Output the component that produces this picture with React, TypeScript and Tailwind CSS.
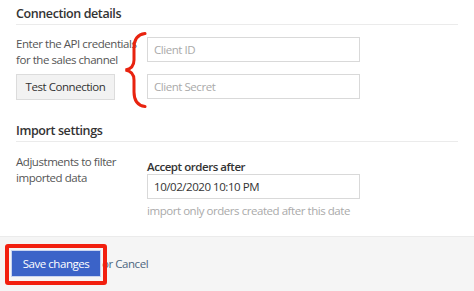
import React from 'react';

const Bracket: React.FC = () => (
  <svg
    className="absolute left-[108px] top-[-4px]"
    width="24"
    height="76"
    viewBox="0 0 24 76"
    fill="none"
  >
    <path
      d="M21 1.5 C13 2.5 10 8 10 16 L10 28 C10 34 7 37 1.5 38 C7 39 10 42 10 48 L10 60 C10 68 13 73.5 21 74.5"
      stroke="#e8230f"
      strokeWidth="3"
      strokeLinecap="round"
    />
  </svg>
);

const App: React.FC = () => {
  return (
    <div
      className="w-[474px] h-[291px] bg-white flex flex-col overflow-hidden text-[11.5px] tracking-[-0.45px] text-[#555]"
      style={{ fontFamily: '"Open Sans", "DejaVu Sans", sans-serif' }}
    >
      <div className="flex-1 px-4">
        <h2 className="pt-[5px] pb-[1px] leading-[18px] text-[12.5px] tracking-[-0.4px] font-semibold text-[#333] border-b border-[#ebebeb]">
          Connection details
        </h2>

        <div className="relative flex mt-[11px]">
          <div className="w-[131px] shrink-0">
            <p className="leading-[16px] whitespace-nowrap">
              Enter the API credentials
              <br />
              for the sales channel
            </p>
            <button className="mt-[6px] h-[26px] w-[99px] bg-[#f2f2f2] border border-[#dcdcdc] text-[11.5px] tracking-[-0.45px] text-[#333]">
              Test Connection
            </button>
          </div>
          <Bracket />
          <div className="flex flex-col gap-[12px] pt-[1px]">
            <input
              placeholder="Client ID"
              className="w-[213px] h-[25px] px-[6px] border border-[#d9d9d9] text-[11.5px] tracking-[-0.45px] placeholder:text-[#aaa] outline-none"
            />
            <input
              placeholder="Client Secret"
              className="w-[213px] h-[25px] px-[6px] border border-[#d9d9d9] text-[11.5px] tracking-[-0.45px] placeholder:text-[#aaa] outline-none"
            />
          </div>
        </div>

        <h2 className="mt-[17px] pt-[5px] pb-[1px] leading-[18px] text-[12.5px] tracking-[-0.4px] font-semibold text-[#333] border-b border-[#ebebeb]">
          Import settings
        </h2>

        <div className="flex mt-[12px]">
          <p className="w-[131px] shrink-0 leading-[16px] whitespace-nowrap">
            Adjustments to filter
            <br />
            imported data
          </p>
          <div className="pt-[6px]">
            <label className="block leading-[14px] font-semibold text-[#333]">Accept orders after</label>
            <input
              defaultValue="10/02/2020 10:10 PM"
              className="w-[213px] h-[25px] px-[6px] border border-[#d9d9d9] text-[11.5px] tracking-[-0.45px] text-[#333] outline-none"
            />
            <p className="mt-[4px] leading-[16px] text-[#aaa]">import only orders created after this date</p>
          </div>
        </div>
      </div>

      <div className="relative h-[55px] bg-[#f5f5f5] border-t border-[#ebebeb] flex items-center pl-[11px] pb-[1px]">
        <button className="h-[27px] w-[90px] bg-[#3b63c8] border border-[#c9d4f0] text-white text-[11.5px] tracking-[-0.45px]">
          Save changes
        </button>
        <span className="ml-[1px] text-[#4d6680]">or Cancel</span>
        <div className="absolute left-[5px] top-[7px] w-[102px] h-[41px] border-[4px] border-[#f21f0f] rounded-[3px]" />
      </div>
    </div>
  );
};

export default App;
